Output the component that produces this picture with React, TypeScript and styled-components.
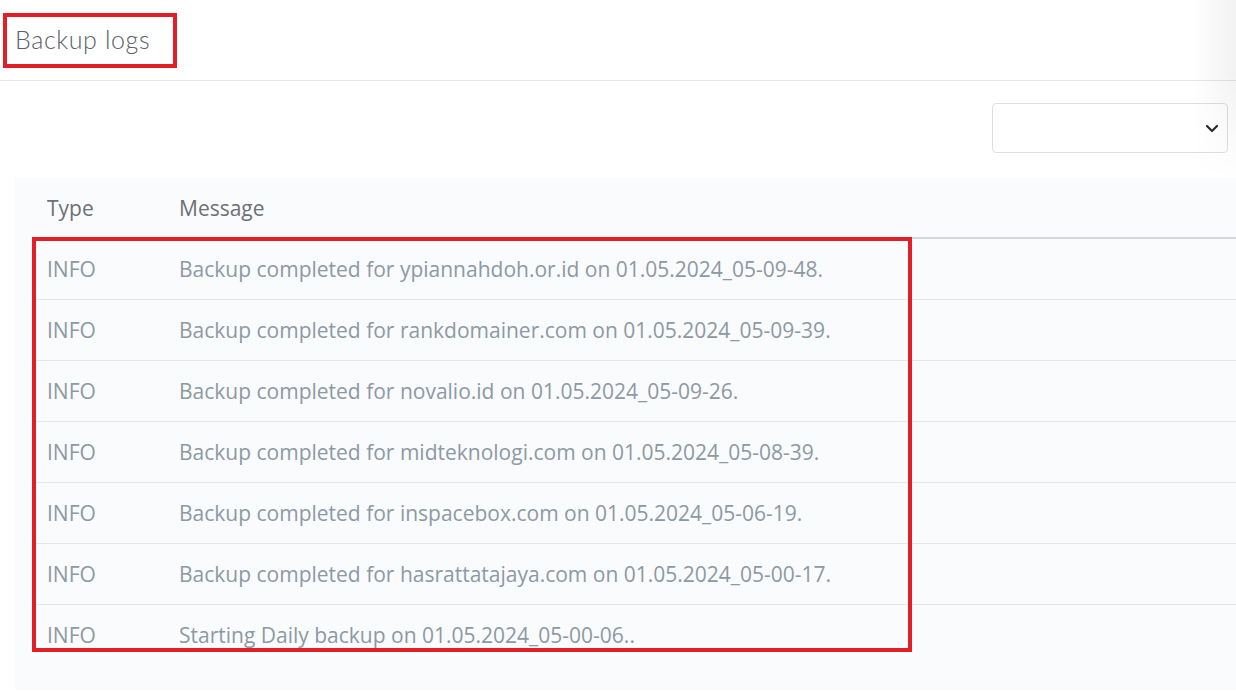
import styled, { createGlobalStyle } from 'styled-components'

const GlobalStyle = createGlobalStyle`
  html, body {
    margin: 0;
    padding: 0;
    background: #fff;
  }
  body {
    font-family: 'Open Sans', 'Liberation Sans', sans-serif;
  }
`

const Page = styled.div`
  position: relative;
  width: 100%;
  min-height: 697px;
  overflow: hidden;
  background: #fff;

  &::after {
    content: '';
    position: absolute;
    top: 0;
    right: 0;
    width: 44px;
    height: 180px;
    background: linear-gradient(to right, rgba(0, 0, 0, 0) 0%, rgba(0, 0, 0, 0.05) 100%);
    -webkit-mask-image: linear-gradient(to bottom, #000 40%, transparent 100%);
    mask-image: linear-gradient(to bottom, #000 40%, transparent 100%);
    pointer-events: none;
  }
`

const Header = styled.header`
  height: 81px;
  padding: 13px 0 0 3px;
  box-sizing: border-box;
  border-bottom: 1px solid #e6e6e6;
`

const Title = styled.h1`
  margin: 0;
  width: 174px;
  height: 55px;
  box-sizing: border-box;
  border: 4px solid #e01f26;
  padding: 0 0 4px 8px;
  display: flex;
  align-items: center;
  font-family: Lato, 'Open Sans', sans-serif;
  font-weight: 300;
  font-size: 25px;
  color: #5b6068;
  letter-spacing: 0.6px;
`

const Toolbar = styled.div`
  display: flex;
  justify-content: flex-end;
  padding: 22px 8px 25px 0;
`

const Select = styled.div`
  position: relative;
  width: 236px;
  height: 50px;
  box-sizing: border-box;
  border: 1px solid #dcdfe2;
  border-radius: 4px;
  background: #fff;
  display: flex;
  align-items: center;
  justify-content: flex-end;
  padding-right: 8px;
`

const Panel = styled.section`
  position: relative;
  margin-left: 15px;
  height: 512px;
  background: #fafbfc;
  padding-left: 17px;
`

const Table = styled.table`
  width: 100%;
  border-collapse: collapse;
  font-family: 'Open Sans', 'Liberation Sans', sans-serif;
  font-size: 21px;
`

const Th = styled.th<{ $w?: number }>`
  text-align: left;
  font-weight: 400;
  color: #6d7074;
  height: 60px;
  padding: 0 0 0 15px;
  width: ${({ $w }) => ($w ? `${$w}px` : 'auto')};
  border-bottom: 2px solid #d4d8dc;
  box-sizing: border-box;
`

const Row = styled.tr`
  &:last-child td {
    border-bottom: none;
  }
`

const Td = styled.td`
  color: #8d99a4;
  height: 61px;
  padding: 0 0 0 15px;
  border-bottom: 1px solid #e3e6e9;
  box-sizing: border-box;
  white-space: nowrap;
`

const Highlight = styled.div`
  position: absolute;
  left: 17px;
  top: 59px;
  width: 880px;
  height: 415px;
  box-sizing: border-box;
  border: 4px solid #e01f26;
  pointer-events: none;
`

const logs = [
  'Backup completed for ypiannahdoh.or.id on 01.05.2024_05-09-48.',
  'Backup completed for rankdomainer.com on 01.05.2024_05-09-39.',
  'Backup completed for novalio.id on 01.05.2024_05-09-26.',
  'Backup completed for midteknologi.com on 01.05.2024_05-08-39.',
  'Backup completed for inspacebox.com on 01.05.2024_05-06-19.',
  'Backup completed for hasrattatajaya.com on 01.05.2024_05-00-17.',
  'Starting Daily backup on 01.05.2024_05-00-06..',
]

export default function App() {
  return (
    <>
      <GlobalStyle />
      <Page>
        <Header>
          <Title>Backup logs</Title>
        </Header>
        <Toolbar>
          <Select>
            <svg width="14" height="10" viewBox="0 0 14 10">
              <path d="M2 3 L7 8 L12 3" fill="none" stroke="#2b2b2b" strokeWidth="2.2" strokeLinecap="round" strokeLinejoin="round" />
            </svg>
          </Select>
        </Toolbar>
        <Panel>
          <Table>
            <thead>
              <tr>
                <Th $w={132}>Type</Th>
                <Th>Message</Th>
              </tr>
            </thead>
            <tbody>
              {logs.map((msg, i) => (
                <Row key={i}>
                  <Td>INFO</Td>
                  <Td>{msg}</Td>
                </Row>
              ))}
            </tbody>
          </Table>
          <Highlight />
        </Panel>
      </Page>
    </>
  )
}
